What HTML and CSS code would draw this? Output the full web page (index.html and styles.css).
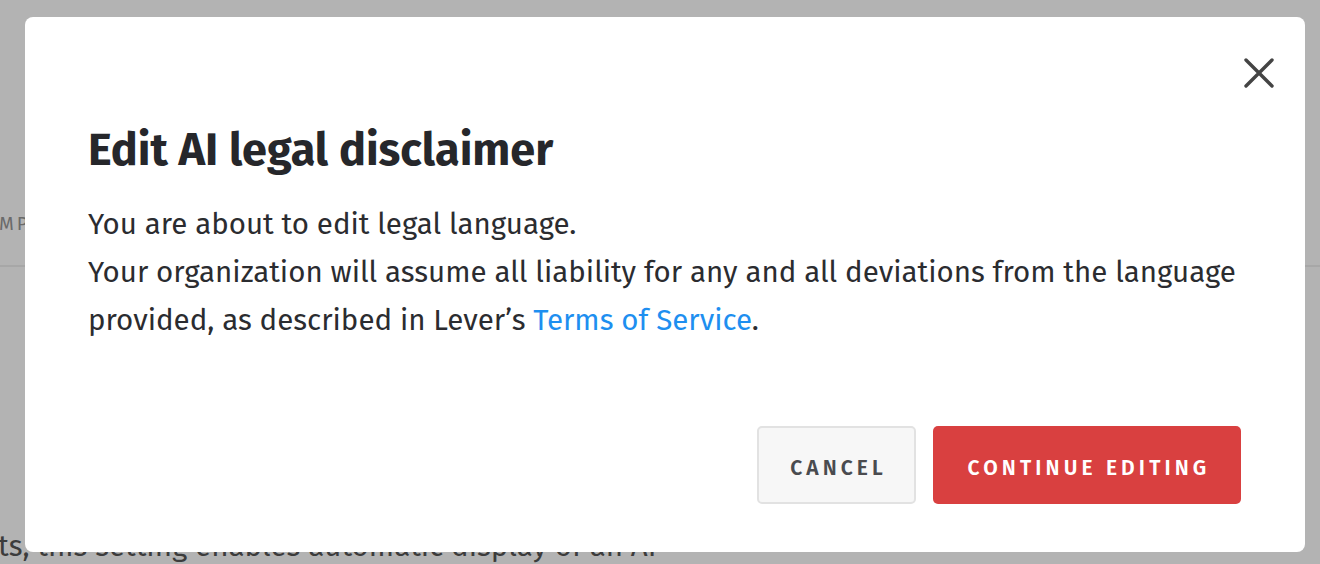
FILE: index.html
```html
<!DOCTYPE html>
<html>
<head>
<meta charset="utf-8">
<link rel="stylesheet" href="styles.css">
</head>
<body>
<div class="page">
  <div class="tabs"><span class="tab">TEMPLATES</span></div>
  <div class="page-text">ts, this setting enables automatic display of an AI</div>
</div>
<div class="modal">
  <button class="close" aria-label="Close">
    <svg width="32" height="32" viewBox="0 0 32 32"><path d="M3 3 L29 29 M29 3 L3 29" stroke="#444" stroke-width="3.4" stroke-linecap="round" fill="none"/></svg>
  </button>
  <h1 class="title">Edit AI legal disclaimer</h1>
  <div class="body">
    <p>You are about to edit legal language.</p>
    <p>Your organization will assume all liability for any and all deviations from the language provided, as described in Lever’s <a href="#">Terms of Service</a>.</p>
  </div>
  <div class="actions">
    <button class="btn btn-cancel">CANCEL</button>
    <button class="btn btn-primary">CONTINUE EDITING</button>
  </div>
</div>
</body>
</html>
```
FILE: styles.css
```css
html, body { margin: 0; padding: 0; }
body {
  width: 1320px;
  height: 564px;
  overflow: hidden;
  background: #b3b3b3;
  font-family: "Fira Sans", Lato, "Liberation Sans", sans-serif;
  position: relative;
}
.page {
  height: 564px;
  display: flex;
  flex-direction: column;
}
.tabs {
  height: 270px;
  border-bottom: 2px solid #a7a7a7;
  box-sizing: border-box;
  display: flex;
  align-items: flex-end;
  padding-bottom: 30px;
  margin-left: -27px;
}
.tab {
  font-size: 19px;
  letter-spacing: 3px;
  color: #6a6a6a;
}
.page-text {
  margin-top: 261px;
  margin-left: -2px;
  font-size: 29.5px;
  color: #3c3c3c;
  white-space: nowrap;
}
.modal {
  position: absolute;
  left: 25px;
  top: 17px;
  width: 1280px;
  height: 535px;
  background: #fff;
  border-radius: 8px;
  box-sizing: border-box;
  padding: 101px 63px 0 63px;
  display: flex;
  flex-direction: column;
}
.close {
  position: absolute;
  top: 40px;
  right: 30px;
  width: 32px;
  height: 32px;
  padding: 0;
  border: 0;
  background: none;
}
.close svg { display: block; }
.title {
  margin: 0;
  font-size: 45px;
  font-weight: 700;
  line-height: 64px;
  color: #26272b;
}
.body {
  margin-top: 18px;
  font-size: 29.5px;
  line-height: 48px;
  color: #2b2c30;
}
.body p { margin: 0; }
.body a { color: #1e8ff0; text-decoration: none; }
.actions {
  margin-top: 82px;
  display: flex;
  justify-content: flex-end;
  gap: 17px;
  padding-right: 1px;
}
.btn {
  height: 78px;
  font-family: inherit;
  font-size: 21px;
  font-weight: 600;
  letter-spacing: 4.1px;
  border-radius: 5px;
  padding: 5px 0 0 4px;
  cursor: pointer;
}
.btn-cancel {
  width: 159px;
  background: #f7f7f7;
  border: 2px solid #e2e2e2;
  color: #4a4b4f;
}
.btn-primary {
  width: 308px;
  background: #d94040;
  border: 0;
  color: #fff;
}
```
